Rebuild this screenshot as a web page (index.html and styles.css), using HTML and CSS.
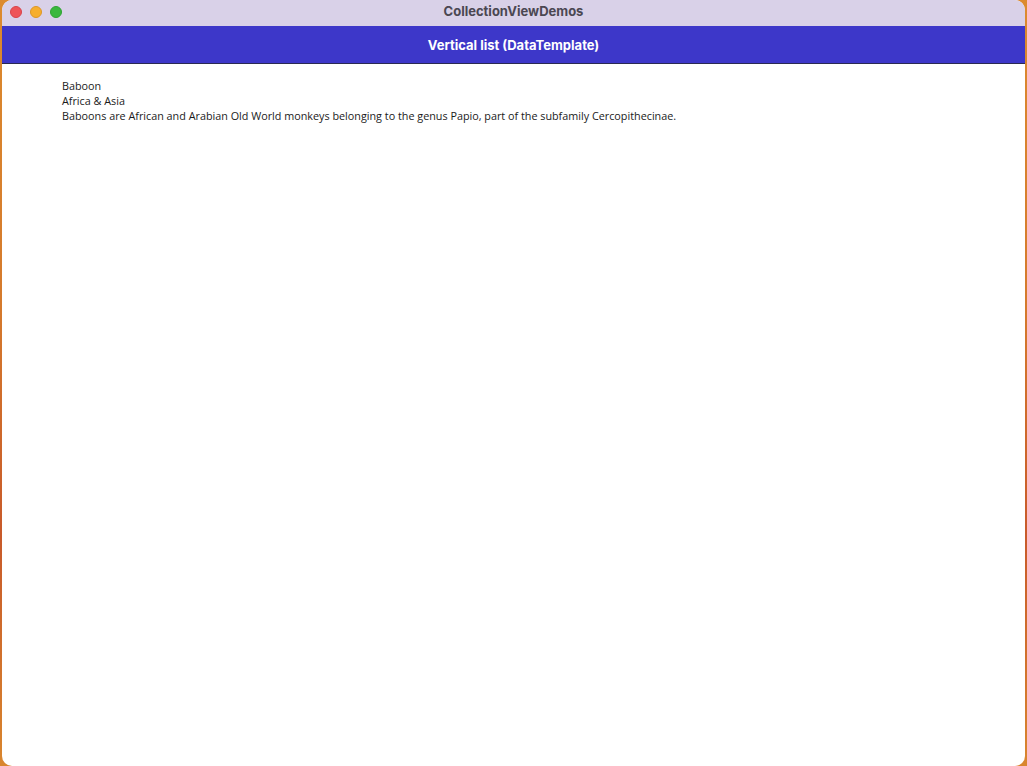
FILE: index.html
```html
<!DOCTYPE html>
<html>
<head>
<meta charset="utf-8">
<link rel="stylesheet" href="styles.css">
</head>
<body>
<div class="window">
  <div class="titlebar">
    <div class="lights">
      <span class="light red"></span>
      <span class="light yellow"></span>
      <span class="light green"></span>
    </div>
    <div class="title">CollectionViewDemos</div>
  </div>
  <div class="navbar">Vertical list (DataTemplate)</div>
  <div class="content">
    <div class="item">
      <div class="line">Baboon</div>
      <div class="line">Africa &amp; Asia</div>
      <div class="line">Baboons are African and Arabian Old World monkeys belonging to the genus Papio, part of the subfamily Cercopithecinae.</div>
    </div>
  </div>
</div>
</body>
</html>
```

FILE: styles.css
```css
html, body {
  margin: 0;
  padding: 0;
  width: 1027px;
  height: 766px;
  overflow: hidden;
}
body {
  background: linear-gradient(180deg, #dc8a2e 0%, #d57a2c 40%, #c85a2a 70%, #d9862e 100%);
  box-sizing: border-box;
  padding: 0 2px;
}
.window {
  height: 766px;
  background: #ffffff;
  border-radius: 10px;
  overflow: hidden;
  display: flex;
  flex-direction: column;
}
.titlebar {
  height: 26px;
  flex: none;
  background: #d9d1e8;
  position: relative;
  display: flex;
  align-items: center;
  justify-content: center;
  box-sizing: border-box;
  padding-bottom: 4px;
}
.lights {
  position: absolute;
  left: 8px;
  top: 6px;
  display: flex;
  gap: 8px;
}
.light {
  width: 12px;
  height: 12px;
  border-radius: 50%;
  box-sizing: border-box;
}
.red { background: #ee5458; border: 0.5px solid #d8434a; }
.yellow { background: #f6ae2e; border: 0.5px solid #dc9626; }
.green { background: #3ab83e; border: 0.5px solid #2ea332; }
.title {
  font-family: Inter, "Liberation Sans", sans-serif;
  font-weight: 700;
  font-size: 13px;
  color: #4b4752;
}
.navbar {
  height: 37px;
  flex: none;
  background: #3d37c9;
  border-bottom: 1px solid #2b2a52;
  color: #ffffff;
  font-family: Inter, "Liberation Sans", sans-serif;
  font-weight: 700;
  font-size: 13px;
  display: flex;
  align-items: center;
  justify-content: center;
}
.content {
  flex: 1;
  padding: 14px 0 0 60px;
}
.line {
  font-family: "Open Sans", "Noto Sans", sans-serif;
  font-size: 10.8px;
  line-height: 15px;
  color: #1a1a1a;
}
```
